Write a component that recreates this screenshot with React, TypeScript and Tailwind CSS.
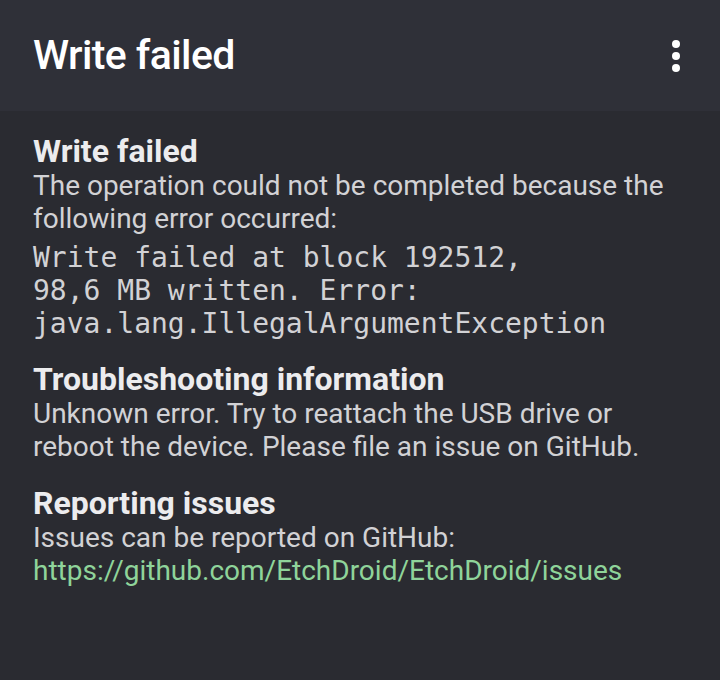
export default function App() {
    return (
        <div className="w-[720px] h-[680px] bg-[#2a2b31] flex flex-col font-['Roboto',sans-serif]">
            <div className="h-[111px] bg-[#2f3038] flex items-start justify-between pl-[33px] pr-[40px]">
                <h1 className="text-[41px] leading-[41px] font-medium text-white tracking-[-0.6px] mt-[35px]">Write failed</h1>
                <div className="flex flex-col gap-[4px] items-center mt-[40px]">
                    <span className="w-[8px] h-[8px] rounded-full bg-white"></span>
                    <span className="w-[8px] h-[8px] rounded-full bg-white"></span>
                    <span className="w-[8px] h-[8px] rounded-full bg-white"></span>
                </div>
            </div>
            <div className="pl-[33px] pr-[40px] pt-[22px] text-[#d2d2d5] text-[28px] leading-[33px]">
                <h2 className="text-[32px] leading-[36px] font-bold text-[#ececee]">Write failed</h2>
                <p>The operation could not be completed because the following error occurred:</p>
                <pre className="font-['DejaVu_Sans_Mono',monospace] text-[28px] leading-[33px] whitespace-pre-wrap mt-[6px]">
                    {"Write failed at block 192512,\n98,6 MB written. Error:\njava.lang.IllegalArgumentException"}
                </pre>
                <h2 className="text-[32px] leading-[36px] font-bold text-[#ececee] mt-[21px]">Troubleshooting information</h2>
                <p>Unknown error. Try to reattach the USB drive or reboot the device. Please file an issue on GitHub.</p>
                <h2 className="text-[32px] leading-[36px] font-bold text-[#ececee] mt-[22px]">Reporting issues</h2>
                <p>Issues can be reported on GitHub:</p>
                <p className="text-[#8fd49a]">https://github.com/EtchDroid/EtchDroid/issues</p>
            </div>
        </div>
    );
}
